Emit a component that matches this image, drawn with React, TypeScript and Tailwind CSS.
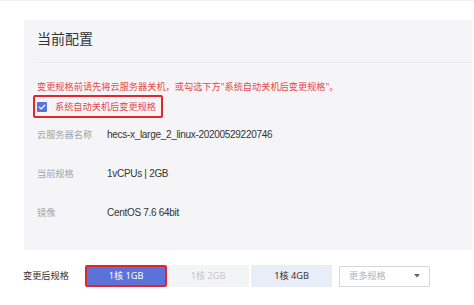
import React from "react";

const rows = [
  { label: "云服务器名称", value: "hecs-x_large_2_linux-20200529220746" },
  { label: "当前规格", value: "1vCPUs | 2GB" },
  { label: "镜像", value: "CentOS 7.6 64bit" },
];

export default function App() {
  return (
    <div
      className="w-[474px] h-[305px] bg-white overflow-hidden text-[9.2px] text-[#333]"
      style={{ fontFamily: '"Noto Sans", "Noto Sans CJK SC", sans-serif' }}
    >
      <div className="h-px bg-[#f1f1f3]" />

      {/* 当前配置 */}
      <div className="ml-[24px] mt-[19px] w-[448px] h-[230px] bg-[#f5f5f7]">
        <div className="pl-[13px] pt-[10px] text-[14px] leading-[18px] text-[#333]">当前配置</div>
        <div className="ml-[13px] mt-[14px] h-px bg-[#ebebee]" />

        <div className="pl-[13px]">
          <p className="mt-[17px] leading-[14px] text-[#e5484d]">
            变更规格前请先将云服务器关机，或勾选下方"系统自动关机后变更规格"。
          </p>

          <div className="-ml-[4px] mt-[1px] w-[130px] h-[23px] border-2 border-[#e3262b] rounded-[2px] flex items-center pl-[2px]">
            <span className="w-[10px] h-[10px] rounded-[1px] bg-[#5a73d8] flex items-center justify-center">
              <svg width="8" height="8" viewBox="0 0 8 8" fill="none">
                <path d="M1.3 4.1 L3.2 5.9 L6.7 2.2" stroke="white" strokeWidth="1.3" strokeLinecap="round" strokeLinejoin="round" />
              </svg>
            </span>
            <span className="ml-[8px] leading-[14px] text-[#e5484d]">系统自动关机后变更规格</span>
          </div>

          <div className="mt-[10px] flex flex-col gap-[25px]">
            {rows.map((r) => (
              <div key={r.label} className="flex leading-[14px]">
                <span className="w-[70px] text-[#a3a3a8]">{r.label}</span>
                <span className="text-[#333] text-[10px] tracking-[-0.3px] font-['Liberation_Sans',sans-serif]">
                  {r.value}
                </span>
              </div>
            ))}
          </div>
        </div>
      </div>

      {/* 变更后规格 */}
      <div className="mt-[15px] ml-[23px] flex items-center">
        <span className="w-[62px] text-[#333]">变更后规格</span>
        <button className="w-[82px] h-[22px] bg-[#5b73d9] border-2 border-[#e3262b] rounded-[2px] text-white">
          1核 1GB
        </button>
        <button className="w-[82px] h-[22px] bg-[#f3f4f6] text-[#c3c6cc]">1核 2GB</button>
        <button className="ml-[2px] w-[81px] h-[22px] bg-[#e9edf8] text-[#333]">1核 4GB</button>
        <div className="ml-[7px] w-[91px] h-[21px] bg-white border border-[#d4d7dc] rounded-[1px] flex items-center justify-between pl-[9px] pr-[9px]">
          <span className="text-[#b0b3b9]">更多规格</span>
          <svg width="6" height="4" viewBox="0 0 6 4">
            <path d="M0 0 H6 L3 3.5 Z" fill="#666" />
          </svg>
        </div>
      </div>
    </div>
  );
}
